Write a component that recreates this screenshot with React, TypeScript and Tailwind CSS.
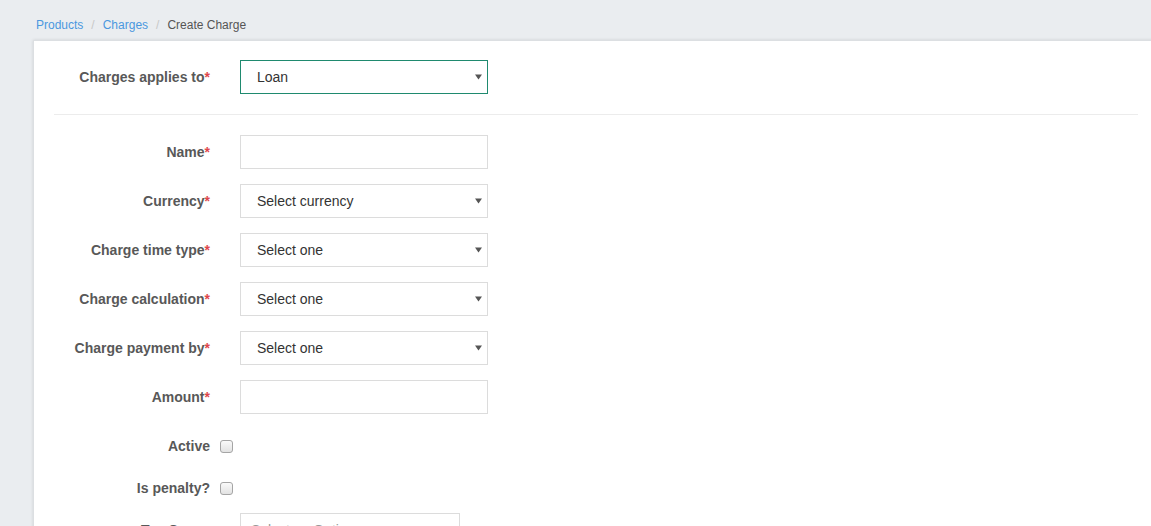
import React from "react";

const font = { fontFamily: '"Liberation Sans", Arial, Helvetica, sans-serif' };

function Caret() {
  return (
    <svg width="7" height="6" viewBox="0 0 7 6" className="shrink-0">
      <path d="M0 0.5 H7 L3.5 5.5 Z" fill="#555" />
    </svg>
  );
}

function Label({ text, req = true }: { text: string; req?: boolean }) {
  return (
    <div className="w-[156px] shrink-0 text-right text-[14px] font-bold text-[#585858] leading-[20px]">
      {text}
      {req && <span className="text-[#e0474c]">*</span>}
    </div>
  );
}

function SelectBox({ value, focus = false }: { value: string; focus?: boolean }) {
  return (
    <div
      className={`ml-[30px] flex h-[34px] w-[248px] items-center justify-between border pl-[16px] pr-[5px] text-[14px] text-[#333] ${
        focus ? "border-[#1f8a6f]" : "border-[#dcdcdc]"
      }`}
    >
      <span>{value}</span>
      <Caret />
    </div>
  );
}

function InputBox() {
  return <div className="ml-[30px] h-[34px] w-[248px] border border-[#dcdcdc] bg-white" />;
}

function Checkbox() {
  return (
    <div className="ml-[10px] h-[13px] w-[13px] rounded-[3px] border border-[#a5a5a5] bg-gradient-to-b from-[#fafafa] to-[#e2e2e2]" />
  );
}

export default function App() {
  return (
    <div style={font} className="h-[526px] w-[1151px] overflow-hidden bg-[#eaedf0]">
      <div className="flex h-[40px] items-start pl-[36px] pt-[18px] text-[12px] leading-[14px]">
        <span className="text-[#4a98df]">Products</span>
        <span className="px-[8px] text-[#c8c8c8]">/</span>
        <span className="text-[#4a98df]">Charges</span>
        <span className="px-[8px] text-[#c8c8c8]">/</span>
        <span className="text-[#555]">Create Charge</span>
      </div>
      <div className="ml-[33px] w-[1130px] border-l border-t border-[#dcdfe2] bg-white pl-[20px] pt-[19px] shadow-[0_0_3px_rgba(0,0,0,0.12)]">
        <div className="flex items-center">
          <Label text="Charges applies to" />
          <SelectBox value="Loan" focus />
        </div>
        <div className="mt-[20px] mb-[20px] h-px w-[1084px] bg-[#ececec]" />
        <div className="flex flex-col gap-[15px]">
          <div className="flex items-center">
            <Label text="Name" />
            <InputBox />
          </div>
          <div className="flex items-center">
            <Label text="Currency" />
            <SelectBox value="Select currency" />
          </div>
          <div className="flex items-center">
            <Label text="Charge time type" />
            <SelectBox value="Select one" />
          </div>
          <div className="flex items-center">
            <Label text="Charge calculation" />
            <SelectBox value="Select one" />
          </div>
          <div className="flex items-center">
            <Label text="Charge payment by" />
            <SelectBox value="Select one" />
          </div>
          <div className="flex items-center">
            <Label text="Amount" />
            <InputBox />
          </div>
        </div>
        <div className="mt-[22px] flex h-[20px] items-center">
          <Label text="Active" req={false} />
          <Checkbox />
        </div>
        <div className="mt-[22px] flex h-[20px] items-center">
          <Label text="Is penalty?" req={false} />
          <Checkbox />
        </div>
        <div className="mt-[15px] flex items-center">
          <Label text="Tax Group" req={false} />
          <div className="ml-[30px] flex h-[34px] w-[220px] items-center justify-between border border-[#dcdcdc] pl-[10px] pr-[9px] text-[14px] text-[#999]">
            <span>Select an Option</span>
            <Caret />
          </div>
        </div>
        <div className="h-[40px]" />
      </div>
    </div>
  );
}
